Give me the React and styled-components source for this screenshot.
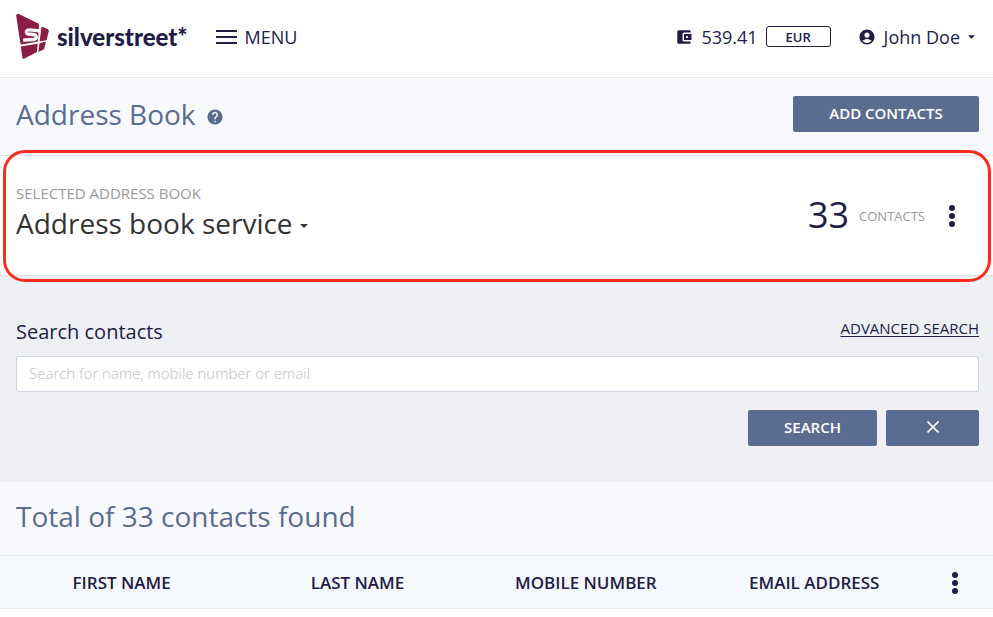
import React, { useState } from "react";
import styled, { createGlobalStyle } from "styled-components";
import { MdAccountBalanceWallet, MdAccountCircle, MdHelp } from "react-icons/md";

const GlobalStyle = createGlobalStyle`
  * {
    box-sizing: border-box;
  }
  body {
    margin: 0;
    background: #fff;
    color: #221c46;
    font-family: "Open Sans", "Noto Sans", sans-serif;
  }
  button, input, select {
    font-family: inherit;
    color: inherit;
  }
`;

const Header = styled.header`
  display: flex;
  align-items: center;
  justify-content: space-between;
  height: 78px;
  padding: 0 18px 0 16px;
  border-bottom: 1px solid #e4e8ee;
`;

const HeaderGroup = styled.div`
  display: flex;
  align-items: center;
  gap: ${({ gap }) => gap || "8px"};
  padding-bottom: 4px;
`;

const Brand = styled.a`
  display: flex;
  align-items: center;
  gap: 8px;
  color: inherit;
  text-decoration: none;
`;

const BrandName = styled.span`
  font-family: Lato, sans-serif;
  font-size: 24px;
  font-weight: 900;
  line-height: 28px;
`;

const PlainButton = styled.button`
  display: flex;
  align-items: center;
  gap: 8px;
  padding: 0;
  border: 0;
  background: none;
  font-size: 18px;
  line-height: 24px;
  cursor: pointer;
`;

const Balance = styled.div`
  display: flex;
  align-items: center;
  gap: 8px;
  font-size: 18px;
  line-height: 24px;
`;

const Currency = styled.button`
  width: 65px;
  height: 21px;
  padding: 0;
  border: 1px solid #221c46;
  border-radius: 3px;
  background: #fff;
  font-size: 13px;
  font-weight: 600;
  line-height: 18px;
  cursor: pointer;
`;

const TitleBar = styled.section`
  display: flex;
  align-items: center;
  justify-content: space-between;
  padding: 18px 14px 23px 16px;
  background: #f8f9fd;
  border-bottom: 1px solid #dfe4ea;
`;

const Heading = styled.h1`
  display: flex;
  align-items: center;
  gap: 10px;
  margin: 0;
  color: #5a6c8f;
  font-size: 28px;
  font-weight: 400;
  line-height: 36px;

  svg {
    margin-top: 6px;
  }
`;

const Button = styled.button`
  display: flex;
  align-items: center;
  justify-content: center;
  width: ${({ width }) => width};
  height: 36px;
  padding: 0 0 2px;
  border: 0;
  border-radius: 2px;
  background: #5a6c8f;
  color: #fff;
  font-size: 15px;
  font-weight: 600;
  cursor: pointer;
`;

/* Card with the red highlight around it */
const BookCard = styled.section`
  position: relative;
  display: flex;
  align-items: center;
  justify-content: space-between;
  height: 120px;
  padding: 0 38px 0 16px;
  background: #fff;
  border-bottom: 1px solid #dbdfe6;

  &::after {
    content: "";
    position: absolute;
    top: -6px;
    right: 2px;
    bottom: -7px;
    left: 3px;
    border: 3px solid #fb2b1c;
    border-radius: 22px;
    pointer-events: none;
  }
`;

const SmallLabel = styled.label`
  display: block;
  color: #999;
  font-size: 15px;
  line-height: 20px;
`;

const BookField = styled.div`
  display: flex;
  flex-direction: column;
  padding-bottom: 6px;
`;

const SelectWrap = styled.div`
  display: flex;
  align-items: center;
  gap: 7px;
  color: #333;

  svg {
    margin-top: 6px;
  }
`;

const BookSelect = styled.select`
  appearance: none;
  field-sizing: content;
  height: 40px;
  padding: 0;
  border: 0;
  background: none;
  font-size: 28px;
  line-height: 40px;
`;

const Counter = styled.div`
  display: flex;
  align-items: center;
  color: #999;
  font-size: 13px;
  gap: 10px;
`;

const CounterValue = styled.span`
  color: #221c46;
  font-size: 36px;
  line-height: 48px;
  padding-bottom: 2px;
`;

const DotsButton = styled.button`
  display: inline-flex;
  padding: 0;
  margin-left: ${({ space }) => space || "0"};
  border: 0;
  background: none;
  vertical-align: middle;
  cursor: pointer;
`;

const SearchForm = styled.form`
  padding: 40px 14px 36px 16px;
  background: #eff0f6;
`;

const SearchTop = styled.div`
  display: flex;
  align-items: flex-start;
  justify-content: space-between;
`;

const SearchLabel = styled.label`
  font-size: 20px;
  line-height: 32px;
`;

const AdvancedLink = styled.a`
  color: inherit;
  font-size: 15px;
  line-height: 24px;
  text-underline-offset: 2px;
`;

const SearchInput = styled.input`
  display: block;
  width: 100%;
  height: 36px;
  margin: 8px 0 18px;
  padding: 0 12px 2px;
  border: 1px solid #cdd3e0;
  border-radius: 2px;
  background: #fff;
  font-size: 15px;
  &::placeholder {
    color: #bdbdbd;
    font-weight: 300;
    opacity: 1;
  }
`;

const Actions = styled.div`
  display: flex;
  justify-content: flex-end;
  gap: 9px;
`;

const ResultTitle = styled.h2`
  margin: 0;
  padding: 16px 16px 21px;
  background: #f8f9fd;
  color: #5a6c8f;
  font-size: 28px;
  font-weight: 400;
  line-height: 36px;
`;

const Table = styled.table`
  width: 100%;
  table-layout: fixed;
  border-collapse: collapse;
  background: #f5f8fd;
`;

const Th = styled.th`
  width: ${({ width }) => width || "auto"};
  height: 53px;
  padding: 0 ${({ end }) => (end ? "11px" : "0")} 0 0;
  border-top: 1px solid #e9ecf1;
  border-bottom: 1px solid #e9ecf1;
  font-size: 17px;
  font-weight: 600;
  text-align: center;
`;

const Logo = () => (
  <svg width="33" height="45" viewBox="0 0 99 136" aria-hidden="true">
    <g fill="#8c1c45">
      <path d="M0 4Q1-1 8 0L67 29Q70 31 69 36L66 83L17 92Q14 92 13 89Z" />
      <path d="M77 38L96 46Q99 48 99 51L92 79L71 82Z" />
      <path d="M14 98L65 90L63 115L24 135Q20 137 19 132Z" />
      <path d="M71 88L90 84L85 104Q84 107 81 108L67 115Z" />
    </g>
    <path
      d="M70 51L42 48Q30 47 31 55Q32 61 42 61L52 62Q62 63 61 71Q60 77 50 77L21 79"
      fill="none"
      stroke="#fff"
      strokeWidth="10"
    />
  </svg>
);

const MenuIcon = () => (
  <svg width="21" height="14" viewBox="0 0 21 14" fill="#221c46" aria-hidden="true">
    <path d="M0 0h21v2H0zM0 6h21v2H0zM0 12h21v2H0z" />
  </svg>
);

const Caret = ({ width = 8 }) => (
  <svg width={width} height="4" viewBox="0 0 8 4" fill="currentColor" aria-hidden="true">
    <path d="M0 0h8L4 4z" />
  </svg>
);

const Dots = () => (
  <svg width="6" height="22" viewBox="0 0 6 22" fill="#221c46" aria-hidden="true">
    <circle cx="3" cy="3" r="3" />
    <circle cx="3" cy="11" r="3" />
    <circle cx="3" cy="19" r="3" />
  </svg>
);

const columns = [
  { title: "FIRST NAME", width: "24.5%" },
  { title: "LAST NAME", width: "23%" },
  { title: "MOBILE NUMBER", width: "23%" },
  { title: "EMAIL ADDRESS", width: "23%" },
];

const App = () => {
  const [query, setQuery] = useState("");

  return (
    <>
      <GlobalStyle />
      <Header>
        <HeaderGroup gap="28px">
          <Brand href="#">
            <Logo />
            <BrandName>silverstreet*</BrandName>
          </Brand>
          <PlainButton type="button">
            <MenuIcon />
            MENU
          </PlainButton>
        </HeaderGroup>
        <HeaderGroup gap="27px">
          <Balance>
            <MdAccountBalanceWallet size={18} />
            539.41
            <Currency type="button">EUR</Currency>
          </Balance>
          <PlainButton type="button">
            <MdAccountCircle size={18} />
            John Doe
            <Caret width={7} />
          </PlainButton>
        </HeaderGroup>
      </Header>

      <TitleBar>
        <Heading>
          Address Book
          <MdHelp size={18} />
        </Heading>
        <Button type="button" width="186px">ADD CONTACTS</Button>
      </TitleBar>

      <BookCard>
        <BookField>
          <SmallLabel htmlFor="book">SELECTED ADDRESS BOOK</SmallLabel>
          <SelectWrap>
            <BookSelect id="book">
              <option>Address book service</option>
            </BookSelect>
            <Caret />
          </SelectWrap>
        </BookField>
        <Counter>
          <CounterValue>33</CounterValue>
          CONTACTS
          <DotsButton type="button" space="14px" aria-label="Address book options">
            <Dots />
          </DotsButton>
        </Counter>
      </BookCard>

      <SearchForm onSubmit={(e) => e.preventDefault()}>
        <SearchTop>
          <SearchLabel htmlFor="search">Search contacts</SearchLabel>
          <AdvancedLink href="#">ADVANCED SEARCH</AdvancedLink>
        </SearchTop>
        <SearchInput
          id="search"
          type="text"
          placeholder="Search for name, mobile number or email"
          value={query}
          onChange={(e) => setQuery(e.target.value)}
        />
        <Actions>
          <Button type="submit" width="129px">SEARCH</Button>
          <Button type="button" width="93px" aria-label="Clear" onClick={() => setQuery("")}>
            <svg width="12" height="12" viewBox="0 0 12 12" stroke="#fff" strokeWidth="1.6" aria-hidden="true">
              <path d="M0.5 0.5L11.5 11.5M11.5 0.5L0.5 11.5" />
            </svg>
          </Button>
        </Actions>
      </SearchForm>

      <ResultTitle>Total of 33 contacts found</ResultTitle>
      <Table>
        <thead>
          <tr>
            {columns.map((col) => (
              <Th key={col.title} width={col.width} scope="col">{col.title}</Th>
            ))}
            <Th scope="col" end="true">
              <DotsButton type="button" aria-label="Table options">
                <Dots />
              </DotsButton>
            </Th>
          </tr>
        </thead>
      </Table>
    </>
  );
};

export default App;
